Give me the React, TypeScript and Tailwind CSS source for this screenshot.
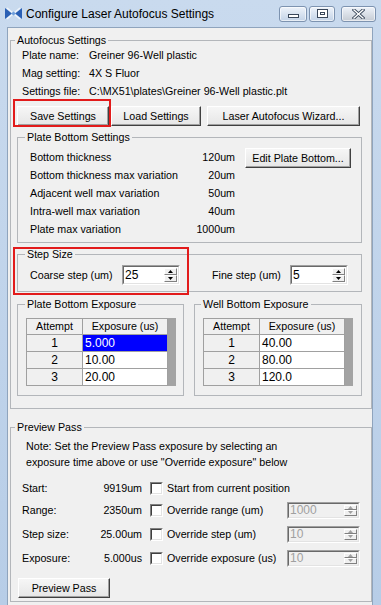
import React from 'react';

type Children = { children?: React.ReactNode };

function Btn({ label, className = '' }: { label: string; className?: string }) {
  return (
    <div
      className={`flex h-[20px] items-center justify-center border border-t-white border-l-white border-r-[#404040] border-b-[#404040] bg-gradient-to-b from-[#f6f6f6] to-[#e6e6e6] shadow-[inset_-1px_-1px_0_#a0a0a0] ${className}`}
    >
      {label}
    </div>
  );
}

function Group({
  title,
  className = '',
  legendClass = 'ml-[7px]',
  children,
}: Children & { title: string; className?: string; legendClass?: string }) {
  return (
    <fieldset className={`border border-[#b3b6ba] ${className}`}>
      <legend className={`px-[2px] leading-[14px] ${legendClass}`}>{title}</legend>
      {children}
    </fieldset>
  );
}

function Arrow({ up, disabled }: { up?: boolean; disabled?: boolean }) {
  const c = disabled ? '#a0a0a0' : '#000';
  return (
    <div className="flex flex-1 items-center justify-center border border-t-white border-l-white border-r-[#808080] border-b-[#808080] bg-[#f0f0f0]">
      <svg width="5" height="3" viewBox="0 0 5 3">
        <polygon points={up ? '2.5,0 5,3 0,3' : '0,0 5,0 2.5,3'} fill={c} />
      </svg>
    </div>
  );
}

function Spin({ value, disabled, className = '' }: { value: string; disabled?: boolean; className?: string }) {
  return (
    <div className={`flex border border-t-[#a0a0a0] border-l-[#a0a0a0] border-r-white border-b-white ${className}`}>
      <div
        className={`flex flex-1 border border-t-[#696969] border-l-[#696969] border-r-[#e3e3e3] border-b-[#e3e3e3] ${
          disabled ? 'bg-[#f0f0f0] text-[#a0a0a0]' : 'bg-white'
        }`}
      >
        <span className="flex flex-1 items-center pl-[1px] text-[12px]">{value}</span>
        <div className="flex w-[14px] flex-col py-[1px] pr-[1px]">
          <Arrow up disabled={disabled} />
          <Arrow disabled={disabled} />
        </div>
      </div>
    </div>
  );
}

function Check() {
  return (
    <div className="h-[13px] w-[13px] border border-t-[#808080] border-l-[#808080] border-r-white border-b-white">
      <div className="h-full w-full border border-t-[#404040] border-l-[#404040] border-r-[#e3e3e3] border-b-[#e3e3e3] bg-white" />
    </div>
  );
}

function ExposureTable({ values, selected }: { values: string[]; selected?: number }) {
  return (
    <div className="flex h-[68px] w-[150px]">
      <div className="flex-1 border-l border-t border-[#a0a0a0]">
        <div className="flex h-[16px]">
          <div className="flex w-[56px] items-center justify-center border-b border-r border-[#a0a0a0]">Attempt</div>
          <div className="flex flex-1 items-center justify-center border-b border-r border-[#a0a0a0]">Exposure (us)</div>
        </div>
        {values.map((v, i) => (
          <div key={i} className="flex h-[17px]">
            <div className="flex w-[56px] items-center justify-center border-b border-r border-[#a0a0a0] text-[12px]">
              {i + 1}
            </div>
            <div
              className={`flex flex-1 items-center border-b border-r border-[#a0a0a0] pl-[2px] text-[12px] ${
                selected === i ? 'bg-[#0000ff] text-white' : 'bg-white'
              }`}
            >
              {v}
            </div>
          </div>
        ))}
      </div>
      <div className="w-[8px] bg-[#a3a3a3]" />
    </div>
  );
}

function CaptionBtn({ kind, className = '' }: { kind: 'min' | 'max' | 'close'; className?: string }) {
  return (
    <div
      className={`flex h-[16px] items-center justify-center rounded-[3px] border border-[#7d93b0] bg-gradient-to-b from-[#eef3fa] to-[#c3d3e7] shadow-[inset_0_0_0_1px_rgba(255,255,255,0.6)] ${className}`}
    >
      {kind === 'min' && <div className="mt-[4px] h-[4px] w-[11px] border border-[#39475a] bg-white" />}
      {kind === 'max' && (
        <div className="flex h-[9px] w-[11px] items-center justify-center border border-[#39475a] bg-white">
          <div className="h-[3px] w-[5px] border border-[#39475a]" />
        </div>
      )}
      {kind === 'close' && (
        <svg width="13" height="10" viewBox="0 0 13 10">
          <path d="M2 1 L11 9 M11 1 L2 9" stroke="#39475a" strokeWidth="3.2" strokeLinecap="square" />
          <path d="M2 1 L11 9 M11 1 L2 9" stroke="#fff" strokeWidth="1.4" strokeLinecap="square" />
        </svg>
      )}
    </div>
  );
}

const previewRows = [
  { label: 'Range:', value: '2350um', check: 'Override range (um)', spin: '1000' },
  { label: 'Step size:', value: '25.00um', check: 'Override step (um)', spin: '10' },
  { label: 'Exposure:', value: '5.000us', check: 'Override exposure (us)', spin: '10' },
];

export default function App() {
  return (
    <div className="h-[605px] w-[381px] overflow-hidden bg-gradient-to-b from-[#c9daee] to-[#b7cde7] font-['Liberation_Sans',Arial,sans-serif] text-[10.7px] text-black">
      {/* title bar */}
      <div className="flex h-[27px] items-center pl-[5px] pr-[5px]">
        <svg width="17" height="13" viewBox="0 0 17 13">
          <polygon points="0,1 7,6.5 0,12" fill="#2a5fb4" />
          <polygon points="17,1 10,6.5 17,12" fill="#2a5fb4" />
          <path d="M2 1 L15 12 M15 1 L2 12" stroke="#eef4fb" strokeWidth="1.6" />
          <polygon points="6,6.5 8.5,4.5 11,6.5 8.5,8.5" fill="#6f9fdc" />
        </svg>
        <span className="ml-[4px] text-[12px] leading-none">Configure Laser Autofocus Settings</span>
        <div className="ml-auto flex items-center">
          <CaptionBtn kind="min" className="w-[28px]" />
          <CaptionBtn kind="max" className="ml-[2px] w-[26px]" />
          <CaptionBtn kind="close" className="ml-[6px] w-[35px] from-[#eceff3] to-[#c6ccd4]" />
        </div>
      </div>

      {/* client area */}
      <div className="ml-[7px] h-[578px] w-[366px] border-x border-t border-[#8fa4bd] bg-[#f0f0f0] pt-[5px]">
        <Group title="Autofocus Settings" legendClass="ml-[4px]" className="ml-[2px] w-[362px] pb-[12px]">
          <div className="-mt-px pl-[11px]">
            {[
              ['Plate name:', 'Greiner 96-Well plastic'],
              ['Mag setting:', '4X S Fluor'],
              ['Settings file:', 'C:\\MX51\\plates\\Greiner 96-Well plastic.plt'],
            ].map(([k, v]) => (
              <div key={k} className="flex h-[18px] items-center">
                <span className="w-[67px]">{k}</span>
                <span>{v}</span>
              </div>
            ))}
          </div>

          <div className="ml-[6px] mt-[6px] flex">
            <div className="relative">
              <Btn label="Save Settings" className="w-[92px]" />
              <span className="absolute left-[-4px] top-[-7px] h-[28px] w-[98px] border-2 border-[#e21b1b]" />
            </div>
            <Btn label="Load Settings" className="ml-[2px] w-[90px]" />
            <Btn label="Laser Autofocus Wizard..." className="ml-[6px] w-[153px]" />
          </div>

          <Group title="Plate Bottom Settings" className="ml-[6px] mt-[4px] w-[345px]">
            <div className="flex pb-[4px] pl-[12px] pt-[4px]">
              <div className="w-[205px]">
                {[
                  ['Bottom thickness', '120um'],
                  ['Bottom thickness max variation', '20um'],
                  ['Adjacent well max variation', '50um'],
                  ['Intra-well max variation', '40um'],
                  ['Plate max variation', '1000um'],
                ].map(([k, v]) => (
                  <div key={k} className="flex h-[18px] items-center justify-between">
                    <span>{k}</span>
                    <span>{v}</span>
                  </div>
                ))}
              </div>
              <Btn label="Edit Plate Bottom..." className="ml-[10px] w-[106px]" />
            </div>
          </Group>

          <div className="relative ml-[6px] mt-[4px] w-[345px]">
            <Group title="Step Size" className="w-[345px]">
              <div className="flex items-center pb-[6px] pl-[12px] pt-[4px]">
                <span className="w-[92px]">Coarse step (um)</span>
                <Spin value="25" className="h-[20px] w-[58px]" />
                <span className="ml-[32px] w-[78px]">Fine step (um)</span>
                <Spin value="5" className="h-[20px] w-[58px]" />
              </div>
            </Group>
            <span className="absolute left-[-4px] top-0 h-[48px] w-[176px] border-2 border-[#e21b1b]" />
          </div>

          <div className="ml-[6px] mt-[5px] flex gap-[10px]">
            <Group title="Plate Bottom Exposure" className="w-[167px]">
              <div className="pb-[9px] pl-[8px] pt-[7px]">
                <ExposureTable values={['5.000', '10.00', '20.00']} selected={0} />
              </div>
            </Group>
            <Group title="Well Bottom Exposure" legendClass="ml-[6px]" className="w-[168px]">
              <div className="pb-[9px] pl-[8px] pt-[7px]">
                <ExposureTable values={['40.00', '80.00', '120.0']} />
              </div>
            </Group>
          </div>
        </Group>

        <Group title="Preview Pass" legendClass="ml-[4px]" className="ml-[2px] mt-[11px] w-[362px] pb-[3px]">
          <div className="pl-[15px] pt-[4px] leading-[16px]">
            <div>Note: Set the Preview Pass exposure by selecting an</div>
            <div>exposure time above or use "Override exposure" below</div>
          </div>
          <div className="mt-[9px] pl-[11px]">
            <div className="flex h-[19px] items-center">
              <div className="flex w-[120px] justify-between">
                <span>Start:</span>
                <span>9919um</span>
              </div>
              <div className="ml-[8px]">
                <Check />
              </div>
              <span className="ml-[4px]">Start from current position</span>
            </div>
            {previewRows.map((r) => (
              <div key={r.label} className="flex h-[24px] items-center">
                <div className="flex w-[120px] justify-between">
                  <span>{r.label}</span>
                  <span>{r.value}</span>
                </div>
                <div className="ml-[8px]">
                  <Check />
                </div>
                <span className="ml-[4px] w-[120px]">{r.check}</span>
                <Spin value={r.spin} disabled className="h-[17px] w-[73px]" />
              </div>
            ))}
          </div>
          <Btn label="Preview Pass" className="ml-[7px] mt-[8px] w-[92px]" />
        </Group>
      </div>
    </div>
  );
}
